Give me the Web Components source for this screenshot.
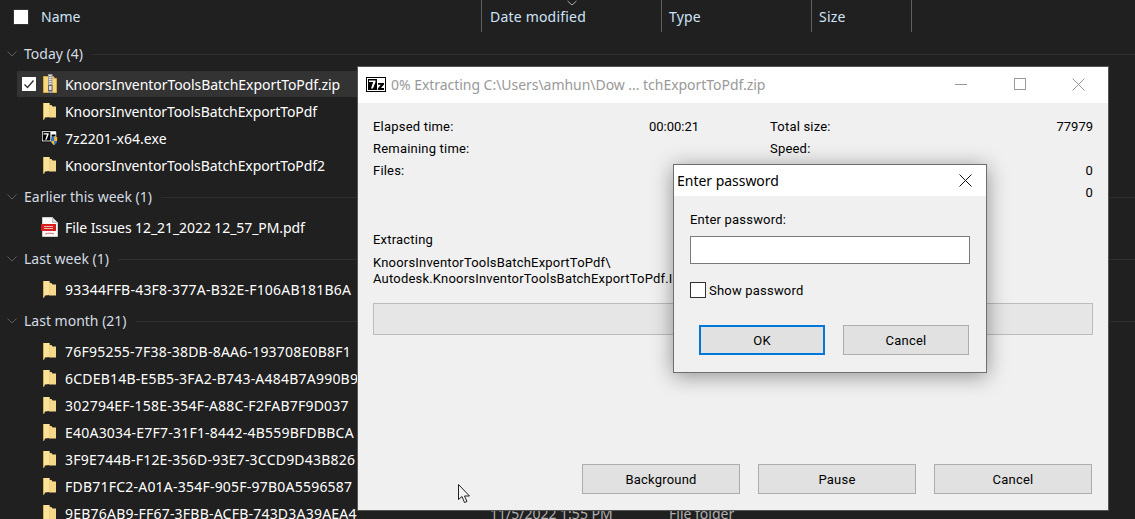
<!DOCTYPE html>
<html>
<head>
<meta charset="utf-8">
<style>
  html, body { margin: 0; height: 100%; background: #202020; overflow: hidden; }
  body { font-family: "Noto Sans", "Open Sans", sans-serif; }
</style>
</head>
<body>
<desktop-view>
  <explorer-pane>
    <file-group label="Today (4)">
      <file-row icon="zip" selected style="letter-spacing:-.05px">KnoorsInventorToolsBatchExportToPdf.zip</file-row>
      <file-row icon="folder" style="letter-spacing:-.08px">KnoorsInventorToolsBatchExportToPdf</file-row>
      <file-row icon="exe" style="letter-spacing:.05px">7z2201-x64.exe</file-row>
      <file-row icon="folder" style="letter-spacing:-.08px">KnoorsInventorToolsBatchExportToPdf2</file-row>
    </file-group>
    <file-group label="Earlier this week (1)">
      <file-row icon="pdf" style="letter-spacing:-.08px">File Issues 12_21_2022 12_57_PM.pdf</file-row>
    </file-group>
    <file-group label="Last week (1)">
      <file-row icon="folder" style="letter-spacing:.22px">93344FFB-43F8-377A-B32E-F106AB181B6A</file-row>
    </file-group>
    <file-group label="Last month (21)">
      <file-row icon="folder" style="letter-spacing:.22px">76F95255-7F38-38DB-8AA6-193708E0B8F1</file-row>
      <file-row icon="folder" style="letter-spacing:.22px">6CDEB14B-E5B5-3FA2-B743-A484B7A990B9</file-row>
      <file-row icon="folder" style="letter-spacing:.22px">302794EF-158E-354F-A88C-F2FAB7F9D037</file-row>
      <file-row icon="folder" style="letter-spacing:.22px">E40A3034-E7F7-31F1-8442-4B559BFDBBCA</file-row>
      <file-row icon="folder" style="letter-spacing:.22px">3F9E744B-F12E-356D-93E7-3CCD9D43B826</file-row>
      <file-row icon="folder" style="letter-spacing:.22px">FDB71FC2-A01A-354F-905F-97B0A5596587</file-row>
      <file-row icon="folder" date="11/5/2022 1:55 PM" kind="File folder" style="letter-spacing:.22px">9EB76AB9-FF67-3FBB-ACFB-743D3A39AEA4</file-row>
    </file-group>
  </explorer-pane>
  <progress-window></progress-window>
  <password-dialog></password-dialog>
  <mouse-cursor></mouse-cursor>
</desktop-view>

<script>
const ICONS = {
  folder: `<svg width="13" height="17" viewBox="0 0 13 17"><path d="M6 2h2.500l1 1.500H13V14.500H6z" fill="#f5d889"/><path d="M0 0h6.500v14L2 14.500 1 17 0 16z" fill="#fbe29b"/><path d="M0 0h1v16.500H0z" fill="#dcae4a"/><path d="M6.500 0h.5v14h-.5z" fill="#e8c36b"/></svg>`,
  zip: `<svg width="14" height="20" viewBox="0 0 14 20"><path d="M.5 2.500h10l1 2h2v14H.5z" fill="#f8d67c" stroke="#d9a83f"/><rect x="5" y="0" width="4.500" height="19" fill="#9c9c9c"/><path d="M6 1.500h2.500M6 3.500h2.500M6 5.500h2.500M6 7.500h2.500M6 9.500h2.500" stroke="#e6e6e6"/><rect x="5.500" y="11.500" width="3.500" height="5" fill="#ddd" stroke="#666"/></svg>`,
  exe: `<svg width="20" height="18" viewBox="0 0 20 18"><rect x="0" y="0" width="19" height="14" fill="#000"/><rect x="1" y="1" width="17" height="12" fill="#fff"/><rect x="2" y="2" width="9" height="10" fill="#000"/><path d="M3 3.500h6v1.500l-2.500 6H5l2-6H3z" fill="#fff"/><path d="M12.500 5h4.500v1.500l-2.500 3h2.500V12h-5v-1.500l2.500-3h-2z" fill="#000"/><path d="M12 8l3.500-1.500L19 8v4.500c0 2-1.500 3.500-3.500 5-2-1.500-3.500-3-3.500-5z" fill="#2f74c9"/><path d="M15.500 6.500L19 8v4.500h-3.500zM12 12.500h3.500v5c-2-1.500-3.500-3-3.500-5z" fill="#f2b632"/></svg>`,
  pdf: `<svg width="17" height="20" viewBox="0 0 17 20"><path d="M1.500 .5h10l5 5v14h-15z" fill="#fbfbfb" stroke="#cfcfcf"/><path d="M11.500 .5v5h5z" fill="#e2e2e2" stroke="#bbb"/><rect x="0" y="7" width="15" height="7" fill="#d5201f"/><path d="M3 9h9v1H3zM3 11h9v1H3z" fill="#f3b8b6"/><path d="M4 17c3-1 6-1 9 0" stroke="#e06a68" fill="none"/></svg>`
};

class DesktopView extends HTMLElement {
  constructor() {
    super();
    this.attachShadow({ mode: 'open' }).innerHTML = `
      <style>
        :host { display: block; position: relative; width: 1135px; height: 519px; overflow: hidden; background: #202020; }
      </style>
      <slot></slot>`;
  }
}

class ExplorerPane extends HTMLElement {
  constructor() {
    super();
    this.attachShadow({ mode: 'open' }).innerHTML = `
      <style>
        :host { display: block; color: #fff; font-size: 14px; }
        .head { display: flex; height: 32px; color: #cfe4f7; }
        .chk { width: 14px; height: 14px; background: #fff; margin: 9px 0 0 13px; border: 1px solid #333; flex: none; }
        .col { display: flex; align-items: center; border-right: 1px solid #606060; padding-left: 7px; box-sizing: border-box; position: relative; letter-spacing: .2px; }
        .col.name { width: 453px; padding-left: 12px; letter-spacing: 0; }
        .col.date { width: 180px; padding-left: 8px; }
        .col.type { width: 150px; }
        .col.size { width: 100px; }
        .sort { position: absolute; left: 85px; top: 0; }
        .list { padding-top: 10px; }
      </style>
      <div class="head">
        <span class="chk"></span>
        <span class="col name">Name</span>
        <span class="col date">Date modified<svg class="sort" width="10" height="6" viewBox="0 0 10 6"><path d="M.5 1l4.500 4 4.500-4" stroke="#aaa" fill="none"/></svg></span>
        <span class="col type">Type</span>
        <span class="col size">Size</span>
      </div>
      <div class="list"><slot></slot></div>`;
  }
}

class FileGroup extends HTMLElement {
  constructor() {
    super();
    this.attachShadow({ mode: 'open' }).innerHTML = `
      <style>
        :host { display: block; margin-bottom: 6px; }
        .label { display: flex; align-items: center; height: 24px; color: #d4dbe2; font-size: 14px; margin-bottom: 5px; }
        svg { margin: 0 7px; flex: none; }
        .t { margin-top: -2px; }
        .line { flex: 1; height: 1px; background: #2e2e2e; margin-left: 9px; }
      </style>
      <div class="label">
        <svg width="10" height="6" viewBox="0 0 10 6"><path d="M.5 .5l4.500 4.500 4.500-4.500" stroke="#5c5c5c" fill="none"/></svg>
        <span class="t"></span><span class="line"></span>
      </div>
      <slot></slot>`;
    this.shadowRoot.querySelector('.t').textContent = this.getAttribute('label');
  }
}

class FileRow extends HTMLElement {
  constructor() {
    super();
    const sel = this.hasAttribute('selected');
    const date = this.getAttribute('date');
    const kind = this.getAttribute('kind');
    this.attachShadow({ mode: 'open' }).innerHTML = `
      <style>
        :host { display: block; height: 27px; }
        .row { display: flex; align-items: center; height: 26px; margin-left: 17px; width: 1000px; white-space: nowrap; }
        .row.sel { background: #333; }
        .box { width: 14px; height: 14px; margin-left: 5px; flex: none; background: #fff; display: flex; }
        .ic { width: 17px; margin-left: 5px; display: flex; justify-content: center; flex: none; }
        .ic.off { margin-left: 24px; }
        .name { margin-left: 7px; width: 425px; flex: none; color: #fff; font-size: 14px; }
        .date { width: 179px; flex: none; color: #b0b0b0; letter-spacing: 0; }
        .kind { color: #b0b0b0; letter-spacing: 0; }
      </style>
      <div class="row ${sel ? 'sel' : ''}">
        ${sel ? '<span class="box"><svg width="14" height="14" viewBox="0 0 14 14"><path d="M2.500 7.500l3 3 6-7" stroke="#333" stroke-width="1.400" fill="none"/></svg></span>' : ''}
        <span class="ic ${sel ? '' : 'off'}">${ICONS[this.getAttribute('icon')]}</span>
        <span class="name"><slot></slot></span>
        ${date ? `<span class="date">${date}</span><span class="kind">${kind}</span>` : ''}
      </div>`;
  }
}

class ProgressWindow extends HTMLElement {
  constructor() {
    super();
    this.attachShadow({ mode: 'open' }).innerHTML = `
      <style>
        :host { position: absolute; left: 357px; top: 66px; width: 752px; height: 445px; box-sizing: border-box; border: 1px solid #555; background: #f0f0f0; color: #000; font: 13px Roboto, sans-serif; letter-spacing: .2px; display: flex; flex-direction: column; }
        .title { height: 36px; background: #fff; display: flex; align-items: center; flex: none; color: #999; font: 14px "Noto Sans", sans-serif; letter-spacing: 0; padding-left: 8px; }
        .title .t { margin: -2px 0 0 5px; flex: 1; white-space: nowrap; letter-spacing: -.04px; }
        .logo { width: 20px; height: 15px; flex: none; margin-top: -1px; }
        .ctl { width: 59px; height: 36px; padding-bottom: 2px; box-sizing: border-box; display: flex; align-items: center; justify-content: center; flex: none; }
        .body { flex: 1; padding: 16px 15px 16px 15px; display: flex; flex-direction: column; }
        .stats { display: grid; grid-template-columns: 276px 121px 1fr; grid-auto-rows: 22px; height: 88px; }
        .stats .r { text-align: right; }
        .num { letter-spacing: 0; }
        .extract { margin-top: 25px; }
        .path { margin-top: 8px; line-height: 16px; white-space: nowrap; }
        .bar { height: 32px; margin-top: 16px; background: #e6e6e6; border: 1px solid #bcbcbc; box-sizing: border-box; }
        .btns { margin-top: auto; display: flex; justify-content: flex-end; gap: 18px; padding-right: 1px; }
        button { width: 158px; height: 30px; box-sizing: border-box; background: #e1e1e1; border: 1px solid #adadad; font: inherit; letter-spacing: inherit; color: #000; padding: 0; }
      </style>
      <div class="title">
        <svg class="logo" viewBox="0 0 20 15"><rect width="20" height="15" fill="#000"/><rect x="1" y="1" width="18" height="13" fill="#fff"/><rect x="2" y="2" width="9" height="11" fill="#000"/><path d="M3 3.500h6.500v1.500l-2.500 6.500H5l2.200-6.500H3z" fill="#fff"/><path d="M12 6h6v1.500l-3 3.500h3v2h-6.200v-1.500l3-3.700H12z" fill="#000"/></svg>
        <span class="t">0% Extracting C:\\Users\\amhun\\Dow ... tchExportToPdf.zip</span>
        <span class="ctl"><svg width="12" height="11" viewBox="0 0 12 11"><path d="M0 5.500h12" stroke="#999"/></svg></span>
        <span class="ctl"><svg width="12" height="12" viewBox="0 0 12 12"><rect x=".5" y=".5" width="11" height="11" fill="none" stroke="#999"/></svg></span>
        <span class="ctl"><svg width="13" height="13" viewBox="0 0 13 13"><path d="M.5 .5l12 12M12.500 .5l-12 12" stroke="#999"/></svg></span>
      </div>
      <div class="body">
        <div class="stats">
          <span>Elapsed time:</span><span class="num">00:00:21</span><span style="display:flex;justify-content:space-between"><span>Total size:</span><span class="num">77979</span></span>
          <span>Remaining time:</span><span></span><span>Speed:</span>
          <span>Files:</span><span></span><span class="r">0</span>
          <span></span><span></span><span class="r">0</span>
        </div>
        <div class="extract">Extracting</div>
        <div class="path">KnoorsInventorToolsBatchExportToPdf\\<br>Autodesk.KnoorsInventorToolsBatchExportToPdf.Inventor.addin</div>
        <div class="bar"></div>
        <div class="btns"><button>Background</button><button>Pause</button><button>Cancel</button></div>
      </div>`;
  }
}

class PasswordDialog extends HTMLElement {
  constructor() {
    super();
    this.attachShadow({ mode: 'open' }).innerHTML = `
      <style>
        :host { position: absolute; left: 673px; top: 164px; width: 314px; height: 209px; box-sizing: border-box; border: 1px solid #6e6e6e; background: #f0f0f0; color: #000; font: 13px Roboto, sans-serif; letter-spacing: .2px; box-shadow: 0 3px 20px rgba(0,0,0,.4); display: flex; flex-direction: column; }
        .title { height: 31px; background: #fff; display: flex; align-items: center; justify-content: space-between; flex: none; padding-left: 3px; font: 14px "Noto Sans", sans-serif; letter-spacing: -.03px; }
        .x { width: 42px; display: flex; justify-content: center; }
        .body { padding: 16px 16px 0 16px; }
        .label { height: 16px; line-height: 16px; }
        .field { height: 28px; box-sizing: border-box; width: 280px; border: 1px solid #7a7a7a; background: #fff; margin-top: 8px; }
        .show { display: flex; align-items: center; gap: 3px; margin-top: 18px; height: 16px; }
        .cb { width: 16px; height: 16px; box-sizing: border-box; border: 1px solid #333; background: #fff; }
        .btns { display: flex; gap: 18px; margin: 27px 0 0 9px; }
        button { width: 126px; height: 30px; box-sizing: border-box; background: #e1e1e1; border: 1px solid #adadad; font: inherit; letter-spacing: inherit; color: #000; padding: 0; }
        button.def { border: 2px solid #0078d7; }
      </style>
      <div class="title"><span>Enter password</span><span class="x"><svg width="13" height="13" viewBox="0 0 13 13"><path d="M.5 .5l12 12M12.500 .5l-12 12" stroke="#111"/></svg></span></div>
      <div class="body">
        <div class="label">Enter password:</div>
        <div class="field"></div>
        <div class="show"><span class="cb"></span><span>Show password</span></div>
        <div class="btns"><button class="def">OK</button><button>Cancel</button></div>
      </div>`;
  }
}

class MouseCursor extends HTMLElement {
  constructor() {
    super();
    this.attachShadow({ mode: 'open' }).innerHTML = `
      <style>:host { position: absolute; left: 458px; top: 484px; width: 13px; height: 20px; }</style>
      <svg width="13" height="20" viewBox="0 0 13 20"><path d="M.5 .5v15l3.500-3 2.500 6 2.500-1-2.500-5.500h5z" fill="#f4f4f4" stroke="#222"/></svg>`;
  }
}

customElements.define('desktop-view', DesktopView);
customElements.define('explorer-pane', ExplorerPane);
customElements.define('file-group', FileGroup);
customElements.define('file-row', FileRow);
customElements.define('progress-window', ProgressWindow);
customElements.define('password-dialog', PasswordDialog);
customElements.define('mouse-cursor', MouseCursor);
</script>
</body>
</html>
